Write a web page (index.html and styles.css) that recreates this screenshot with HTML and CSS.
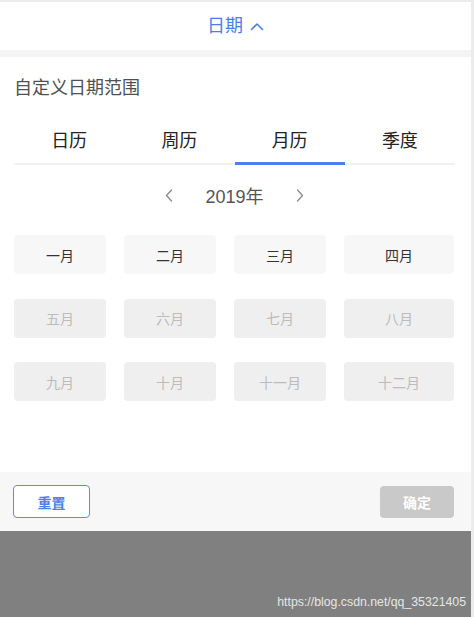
FILE: index.html
```html
<!DOCTYPE html>
<html lang="zh-CN">
<head>
<meta charset="utf-8">
<title>日期</title>
<link rel="stylesheet" href="styles.css">
</head>
<body>
<div class="page">
  <div class="header">
    <span class="header-label">日期</span>
    <svg class="header-arrow" width="14" height="9" viewBox="0 0 14 9"><path d="M1.5 7.5 L7 2 L12.5 7.5" fill="none" stroke="#4a7ee6" stroke-width="1.6" stroke-linecap="round" stroke-linejoin="round"/></svg>
  </div>
  <div class="sep"></div>
  <div class="panel">
    <div class="title">自定义日期范围</div>
    <div class="tabs">
      <div class="tab">日历</div>
      <div class="tab">周历</div>
      <div class="tab active">月历</div>
      <div class="tab">季度</div>
    </div>
    <div class="year-row">
      <svg class="chev" width="8" height="13" viewBox="0 0 8 13"><path d="M6.5 1 L1.5 6.5 L6.5 12" fill="none" stroke="#8a8a8a" stroke-width="1.3" stroke-linecap="round" stroke-linejoin="round"/></svg>
      <span class="year">2019年</span>
      <svg class="chev" width="8" height="13" viewBox="0 0 8 13"><path d="M1.5 1 L6.5 6.5 L1.5 12" fill="none" stroke="#8a8a8a" stroke-width="1.3" stroke-linecap="round" stroke-linejoin="round"/></svg>
    </div>
    <div class="months">
      <div class="month">一月</div>
      <div class="month">二月</div>
      <div class="month">三月</div>
      <div class="month">四月</div>
      <div class="month disabled">五月</div>
      <div class="month disabled">六月</div>
      <div class="month disabled">七月</div>
      <div class="month disabled">八月</div>
      <div class="month disabled">九月</div>
      <div class="month disabled">十月</div>
      <div class="month disabled">十一月</div>
      <div class="month disabled">十二月</div>
    </div>
  </div>
  <div class="footer">
    <button class="btn btn-reset">重置</button>
    <button class="btn btn-ok">确定</button>
  </div>
  <div class="mask">
    <span class="watermark">https://blog.csdn.net/qq_35321405</span>
  </div>
</div>
</body>
</html>
```
FILE: styles.css
```css
html, body {
  margin: 0;
  padding: 0;
}
body {
  background: #ececec;
  font-family: "Liberation Sans", "Noto Sans CJK SC", sans-serif;
  width: 474px;
  height: 617px;
  overflow: hidden;
}
.page {
  width: 471px;
  padding-top: 2px;
  display: flex;
  flex-direction: column;
}
.header {
  height: 48px;
  background: #fff;
  display: flex;
  align-items: center;
  justify-content: center;
  gap: 7px;
  color: #4a7ee6;
  font-size: 18px;
}
.header-label {
  line-height: 22px;
}
.sep {
  height: 7px;
  background: #f4f4f5;
}
.panel {
  background: #fff;
  height: 415px;
  display: flex;
  flex-direction: column;
}
.title {
  padding: 20px 0 0 14px;
  line-height: 22px;
  font-size: 18px;
  color: #505050;
}
.tabs {
  margin: 18px 16px 0 14px;
  display: flex;
  box-shadow: inset 0 -2px 0 #f1f1f1;
}
.tab {
  flex: 1;
  text-align: center;
  font-size: 18px;
  line-height: 24px;
  padding: 12px 0;
  color: #222;
}
.tab.active {
  box-shadow: inset 0 -3px 0 #4d7ff0;
}
.year-row {
  height: 60px;
  margin: 0 16px 0 14px;
  display: flex;
  align-items: center;
  justify-content: center;
  gap: 32px;
}
.year {
  font-size: 18px;
  color: #555;
}
.months {
  margin: 10px 17px 0 14px;
  display: grid;
  grid-template-columns: 92px 92px 92px 1fr;
  grid-auto-rows: 39px;
  column-gap: 18px;
  row-gap: 24.5px;
}
.month {
  background: #f7f7f7;
  border-radius: 4px;
  display: flex;
  align-items: center;
  justify-content: center;
  font-size: 14px;
  color: #333;
}
.month.disabled {
  background: #efefef;
  color: #bcbcbc;
}
.footer {
  height: 59px;
  background: #f7f7f7;
  display: flex;
  align-items: center;
  justify-content: space-between;
  padding: 0 17px 0 13px;
}
.btn {
  font-family: "Liberation Sans", "Noto Sans CJK SC", sans-serif;
  font-size: 14px;
  font-weight: 700;
  border-radius: 4px;
  height: 33px;
  padding: 0;
  cursor: pointer;
}
.btn-reset {
  width: 77px;
  background: #fff;
  border: 1px solid #5b8cf0;
  color: #4e7fe8;
}
.btn-ok {
  width: 74px;
  height: 32px;
  background: #c9c9c9;
  border: none;
  color: #fff;
}
.mask {
  height: 86px;
  background: #808080;
  display: flex;
  align-items: flex-end;
  justify-content: flex-end;
  padding: 0 5px 7px 0;
  box-sizing: border-box;
}
.watermark {
  font-size: 12.3px;
  color: #e6e6e6;
  line-height: 16px;
}
```
